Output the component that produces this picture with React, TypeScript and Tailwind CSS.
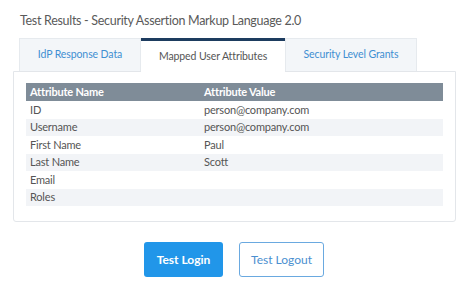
const rows = [
  { name: "ID", value: "person@company.com" },
  { name: "Username", value: "person@company.com" },
  { name: "First Name", value: "Paul" },
  { name: "Last Name", value: "Scott" },
  { name: "Email", value: "" },
  { name: "Roles", value: "" },
];

export default function App() {
  return (
    <div className="h-[288px] w-[474px] overflow-hidden bg-white font-['Lato',sans-serif]">
      <h1 className="pl-[20px] pt-[11px] text-[12.5px] leading-[20px] tracking-[-0.3px] text-[#5a5a5a]">
        Test Results - Security Assertion Markup Language 2.0
      </h1>

      <div className="ml-[19px] mt-[7px] flex h-[33px]">
        <button
          type="button"
          className="w-[122px] border border-b-0 border-[#e6eaee] bg-[#f3f6f9] text-[10.5px] tracking-[-0.1px] text-[#3f8fd2]"
        >
          IdP Response Data
        </button>
        <button
          type="button"
          className="relative z-10 -mb-px w-[144px] border-t-[3px] border-[#1d3c5f] bg-white text-[10.5px] tracking-[-0.1px] text-[#555]"
        >
          Mapped User Attributes
        </button>
        <button
          type="button"
          className="w-[132px] border border-b-0 border-[#e6eaee] bg-[#f3f6f9] text-[10.5px] tracking-[-0.1px] text-[#3f8fd2]"
        >
          Security Level Grants
        </button>
      </div>

      <div className="ml-[13px] w-[443px] rounded-b-[3px] border border-[#e3e6ea] bg-white px-[12px] pb-[15px] pt-[11px]">
        <table className="w-full border-collapse text-left text-[11px] tracking-[-0.2px]">
          <thead>
            <tr className="h-[18px] bg-[#7f8c98] text-white">
              <th className="w-[178px] pl-[4px] font-bold">Attribute Name</th>
              <th className="pl-0 font-bold">Attribute Value</th>
            </tr>
          </thead>
          <tbody className="text-[#555]">
            {rows.map((row, i) => (
              <tr
                key={row.name}
                className={`h-[17.5px] ${i % 2 === 1 ? "bg-[#f2f4f7]" : "bg-white"}`}
              >
                <td className="pl-[4px]">{row.name}</td>
                <td>{row.value}</td>
              </tr>
            ))}
          </tbody>
        </table>
      </div>

      <div className="ml-[144px] mt-[20px] flex gap-[16px]">
        <button
          type="button"
          className="h-[35px] w-[79px] rounded-[3px] bg-[#2196e9] text-[12px] font-bold text-white"
        >
          Test Login
        </button>
        <button
          type="button"
          className="h-[35px] w-[85px] rounded-[3px] border border-[#6aa9e0] bg-white text-[12px] text-[#4b8fd0]"
        >
          Test Logout
        </button>
      </div>
    </div>
  );
}
